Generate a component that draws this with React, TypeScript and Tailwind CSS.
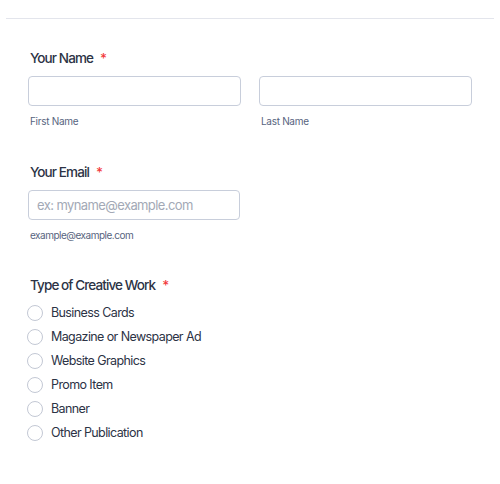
import React from "react";

// Form section: name, email and creative work type.
const OPTIONS = [
  "Business Cards",
  "Magazine or Newspaper Ad",
  "Website Graphics",
  "Promo Item",
  "Banner",
  "Other Publication",
];

const font = { fontFamily: "Inter, 'Noto Sans', sans-serif" };

function Label({ children }: { children: React.ReactNode }) {
  return (
    <div className="flex h-5 items-center pl-[2px] text-[13.5px] font-medium leading-5 tracking-[-0.9px] text-[#2c3345]">
      <span>{children}</span>
      <span className="ml-[7px] text-[#f23a3c]">*</span>
    </div>
  );
}

export default function App() {
  return (
    <div className="h-[484px] w-[500px] bg-white" style={font}>
      <div className="h-[18px]" />
      <div className="mx-[6px] border-t border-[#e3e5ec]" />

      <div className="pl-[28px] pr-[28px]">
        {/* Your Name */}
        <div className="mt-[29px]">
          <Label>Your Name</Label>
          <div className="mt-2 flex gap-[18px]">
            <div className="w-[213px]">
              <input className="h-[30px] w-full rounded-[4px] border border-[#c8cedb] px-2 text-[14px] outline-none" />
              <div className="mt-[7px] pl-[2px] text-[10px] leading-4 tracking-[-0.3px] text-[#57647e]">First Name</div>
            </div>
            <div className="w-[213px]">
              <input className="h-[30px] w-full rounded-[4px] border border-[#c8cedb] px-2 text-[14px] outline-none" />
              <div className="mt-[7px] pl-[2px] text-[10px] leading-4 tracking-[-0.3px] text-[#57647e]">Last Name</div>
            </div>
          </div>
        </div>

        {/* Your Email */}
        <div className="mt-[33px]">
          <Label>Your Email</Label>
          <div className="mt-2 w-[212px]">
            <input
              placeholder="ex: myname@example.com"
              className="h-[30px] w-full rounded-[4px] border border-[#c8cedb] px-2 text-[13px] tracking-[-0.6px] text-[#2c3345] outline-none placeholder:text-[#a3a9b6]"
            />
            <div className="mt-[7px] pl-[2px] text-[10px] leading-4 tracking-[-0.5px] text-[#57647e]">example@example.com</div>
          </div>
        </div>

        {/* Type of Creative Work */}
        <div className="mt-[32px]">
          <Label>Type of Creative Work</Label>
          <div className="mt-[6px] flex flex-col">
            {OPTIONS.map((o) => (
              <label key={o} className="flex h-6 items-center gap-2 text-[12.5px] tracking-[-0.6px] text-[#2c3345]">
                <span className="-ml-px h-4 w-4 rounded-full border border-[#c3c8d4] bg-white" />
                <span>{o}</span>
              </label>
            ))}
          </div>
        </div>
      </div>
    </div>
  );
}
